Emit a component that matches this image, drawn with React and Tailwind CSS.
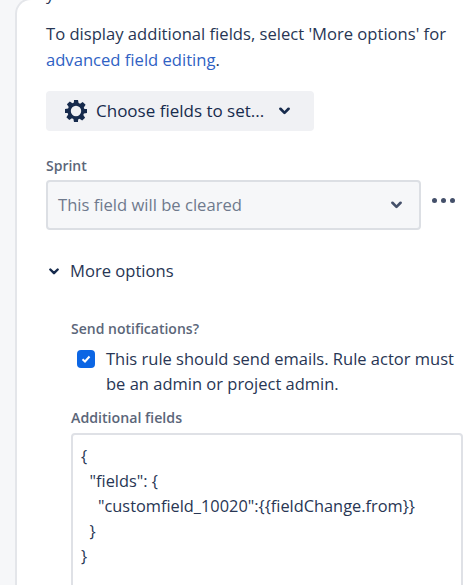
const Gear = () => (
  <svg viewBox="0 0 24 24" className="w-[24px] h-[24px] shrink-0">
    <path
      fillRule="evenodd"
      fill="#172B4D"
      d="M10 1h4l.6 3.100 1.500.6 2.600-1.800 2.900 2.900-1.800 2.600.6 1.500L23 10v4l-3.100.6-.6 1.500 1.800 2.600-2.900 2.900-2.600-1.800-1.500.6L14 23h-4l-.6-3.100-1.500-.6-2.600 1.800-2.900-2.900 1.800-2.600-.6-1.500L1 14v-4l3.100-.6.6-1.500-1.800-2.600 2.900-2.900 2.600 1.800 1.500-.6zM12 6.800a5.200 5.200 0 1 0 0 10.400 5.200 5.200 0 0 0 0-10.400z"
    />
  </svg>
);

const Chevron = ({ className }) => (
  <svg viewBox="0 0 12 8" className={className} fill="none">
    <path d="M1.600 1.600 6 6l4.400-4.400" stroke="currentColor" strokeWidth="2.900" strokeLinecap="round" strokeLinejoin="round" />
  </svg>
);

const App = () => {
  return (
    <div className="h-[585px] w-[468px] overflow-hidden bg-[#f6f7f9] pl-[15px] font-['Open_Sans',sans-serif] text-[#283654]">
      <div className="h-[600px] -mt-[2px] rounded-tl-[16px] border-l-2 border-t-2 border-[#e4e6ea] bg-white pl-[29px]">
        <p className="-mt-[19px] text-[16.5px] leading-[26px]">y</p>

        <div className="mt-[14px] text-[16.6px] leading-[26px]">
          <p>To display additional fields, select 'More options' for</p>
          <p>
            <span className="text-[#2f62c4]">advanced field editing</span>.
          </p>
        </div>

        <button className="mt-[18px] flex h-[40px] w-[268px] items-center rounded-[4px] bg-[#f0f1f4] pl-[18px] text-[17px] text-[#172b4d]">
          <Gear />
          <span className="ml-[8px]">Choose fields to set...</span>
          <Chevron className="ml-[15px] w-[11px] h-[8px]" />
        </button>

        <p className="mt-[25px] text-[14px] leading-[20px] font-semibold text-[#5b6679]">Sprint</p>

        <div className="mt-[4px] flex items-center">
          <div className="flex h-[50px] w-[375px] items-center justify-between rounded-[4px] border-2 border-[#dcdfe4] bg-[#f6f7f9] pl-[10px] pr-[17px]">
            <span className="text-[16.6px] text-[#6f7a8d]">This field will be cleared</span>
            <Chevron className="w-[11px] h-[8px] text-[#44506a]" />
          </div>
          <div className="ml-[11px] mb-[10px] flex gap-[4px]">
            <span className="h-[5px] w-[5px] rounded-full bg-[#44506a]" />
            <span className="h-[5px] w-[5px] rounded-full bg-[#44506a]" />
            <span className="h-[5px] w-[5px] rounded-full bg-[#44506a]" />
          </div>
        </div>

        <div className="mt-[28px] flex items-center text-[16.6px] leading-[26px]">
          <Chevron className="ml-[3px] w-[10px] h-[7px] text-[#172b4d]" />
          <span className="ml-[11px]">More options</span>
        </div>

        <div className="pl-[25px]">
          <p className="mt-[35px] text-[14px] leading-[20px] font-semibold text-[#5b6679]">Send notifications?</p>

          <div className="mt-[7px] flex items-start">
            <span className="mt-[4px] ml-[6px] flex h-[18px] w-[18px] items-center justify-center rounded-[4px] bg-[#0c66e4]">
              <svg viewBox="0 0 12 12" className="w-[12px] h-[12px]" fill="none">
                <path d="M2.500 6.200 5 8.500 9.500 3.500" stroke="white" strokeWidth="2" />
              </svg>
            </span>
            <p className="ml-[11px] w-[352px] text-[16.500px] leading-[25px]">
              This rule should send emails. Rule actor must be an admin or project admin.
            </p>
          </div>

          <p className="mt-[12px] text-[14.200px] leading-[20px] font-semibold text-[#5b6679]">Additional fields</p>

          <div className="mt-[5px] h-[200px] w-[392px] rounded-[4px] border-2 border-[#dfe1e6] bg-white pl-[8px] pt-[9px] text-[16.350px] leading-[25px] whitespace-pre">
            {`{\n  "fields": {\n    "customfield_10020":{{fieldChange.from}}\n  }\n}`}
          </div>
        </div>
      </div>
    </div>
  );
};

export default App;
